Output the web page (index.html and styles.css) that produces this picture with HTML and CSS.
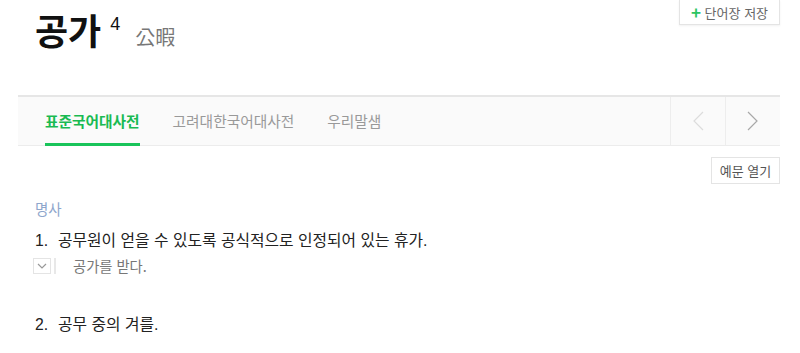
FILE: index.html
```html
<!DOCTYPE html>
<html lang="ko">
    <head>
        <meta charset="UTF-8">
        <meta name="viewport" content="width=device-width, initial-scale=1.0">
        <title>공가 - 국어사전</title>
        <link rel="stylesheet" href="styles.css">
    </head>
    <body>
        <div class="container">
            <div class="entry-head">
                <h1 class="headword">
                    <strong>공가</strong><sup class="homonym">4</sup>
                    <span class="hanja">公暇</span>
                </h1>
                <button class="button save-btn">
                    <span class="plus">+</span> 단어장 저장
                </button>
            </div>

            <div class="tab-bar">
                <ul class="tabs">
                    <li class="tab active">표준국어대사전</li>
                    <li class="tab">고려대한국어대사전</li>
                    <li class="tab">우리말샘</li>
                </ul>
                <div class="tab-nav">
                    <button class="nav-btn" aria-label="이전">
                        <svg width="12" height="20" viewBox="0 0 12 20"><path d="M11 1 L2 10 L11 19" fill="none" stroke="#dcdcdc" stroke-width="1.2"/></svg>
                    </button>
                    <button class="nav-btn" aria-label="다음">
                        <svg width="12" height="20" viewBox="0 0 12 20"><path d="M1 1 L10 10 L1 19" fill="none" stroke="#a8a8a8" stroke-width="1.2"/></svg>
                    </button>
                </div>
            </div>

            <div class="tools">
                <button class="button example-btn">예문 열기</button>
            </div>

            <div class="meaning">
                <p class="pos">명사</p>
                <ol class="senses">
                    <li class="sense">
                        <p class="sense-text"><span class="num">1.</span>공무원이 얻을 수 있도록 공식적으로 인정되어 있는 휴가.</p>
                        <div class="example">
                            <span class="toggle">
                                <svg width="10" height="6" viewBox="0 0 10 6"><path d="M1 1 L5 5 L9 1" fill="none" stroke="#999" stroke-width="1.2"/></svg>
                            </span>
                            <span class="example-text">공가를 받다.</span>
                        </div>
                    </li>
                    <li class="sense">
                        <p class="sense-text"><span class="num">2.</span>공무 중의 겨를.</p>
                    </li>
                </ol>
            </div>
        </div>
    </body>
</html>
```

FILE: styles.css
```css
body {
    margin: 0;
    background-color: #fff;
    font-family: "Liberation Sans", "Noto Sans CJK KR", sans-serif;
    color: #222;
}
.container {
    width: 762px;
    margin-left: 18px;
}
.entry-head {
    display: flex;
    justify-content: space-between;
    align-items: flex-start;
    height: 95px;
}
.headword {
    margin: 0;
    padding: 4px 0 0 17px;
    display: flex;
    align-items: baseline;
    font-weight: normal;
}
.headword strong {
    font-family: "Noto Sans CJK KR", sans-serif;
    font-size: 36px;
    font-weight: bold;
    color: #111;
    line-height: 50px;
}
.homonym {
    font-family: "Liberation Sans", sans-serif;
    font-size: 18px;
    font-weight: normal;
    color: #111;
    position: relative;
    top: -15px;
    margin-left: 9px;
}
.hanja {
    font-family: "Noto Sans CJK KR", sans-serif;
    font-size: 20px;
    color: #777;
    margin-left: 15px;
}
.button {
    background: #fff;
    border: 1px solid #e4e4e4;
    font-family: "Noto Sans CJK KR", sans-serif;
    color: #555;
    cursor: pointer;
    padding: 0;
}
.save-btn {
    width: 101px;
    height: 25px;
    font-size: 13px;
    color: #666;
    border-top: none;
    box-shadow: 0 1px 2px rgba(0, 0, 0, 0.06);
}
.plus {
    color: #2bc463;
    font-size: 17px;
    font-weight: bold;
    line-height: 1;
    vertical-align: -1px;
}
.tab-bar {
    display: flex;
    justify-content: space-between;
    height: 48px;
    background-color: #fafafa;
    border-top: 2px solid #e6e6e6;
    border-bottom: 1px solid #ececec;
}
.tabs {
    list-style: none;
    display: flex;
    gap: 33px;
    margin: 0;
    padding: 0 0 0 27px;
}
.tab {
    font-family: "Noto Sans CJK KR", sans-serif;
    font-size: 14.7px;
    color: #999;
    line-height: 48px;
    height: 47px;
}
.tab.active {
    color: #19ba52;
    font-weight: bold;
    border-bottom: 3px solid #19c45a;
    height: 46px;
}
.tab-nav {
    display: flex;
}
.nav-btn {
    width: 55px;
    height: 48px;
    border: none;
    border-left: 1px solid #ededed;
    background: transparent;
    display: flex;
    align-items: center;
    justify-content: center;
    padding: 0;
}
.tools {
    display: flex;
    justify-content: flex-end;
    margin-top: 11px;
}
.example-btn {
    width: 69px;
    height: 27px;
    font-size: 13px;
    color: #555;
}
.meaning {
    padding-left: 17px;
}
.pos {
    font-family: "Noto Sans CJK KR", sans-serif;
    margin: 14px 0 0;
    font-size: 14.5px;
    color: #8ea6cc;
    line-height: 22px;
}
.senses {
    list-style: none;
    margin: 0;
    padding: 0;
}
.sense-text {
    margin: 10px 0 0;
    font-size: 15.8px;
    line-height: 22px;
}
.num {
    display: inline-block;
    width: 23px;
}
.example {
    display: flex;
    align-items: center;
    margin-top: 6px;
    margin-bottom: 40px;
}
.toggle {
    display: flex;
    align-items: center;
    justify-content: center;
    width: 16px;
    height: 14px;
    border: 1px solid #e4e4e4;
    margin-left: -2px;
}
.example-text {
    font-family: "Noto Sans CJK KR", sans-serif;
    font-size: 14.3px;
    color: #777;
    border-left: 2px solid #e8e8e8;
    padding-left: 17px;
    margin-left: 3px;
    line-height: 16px;
}
```
